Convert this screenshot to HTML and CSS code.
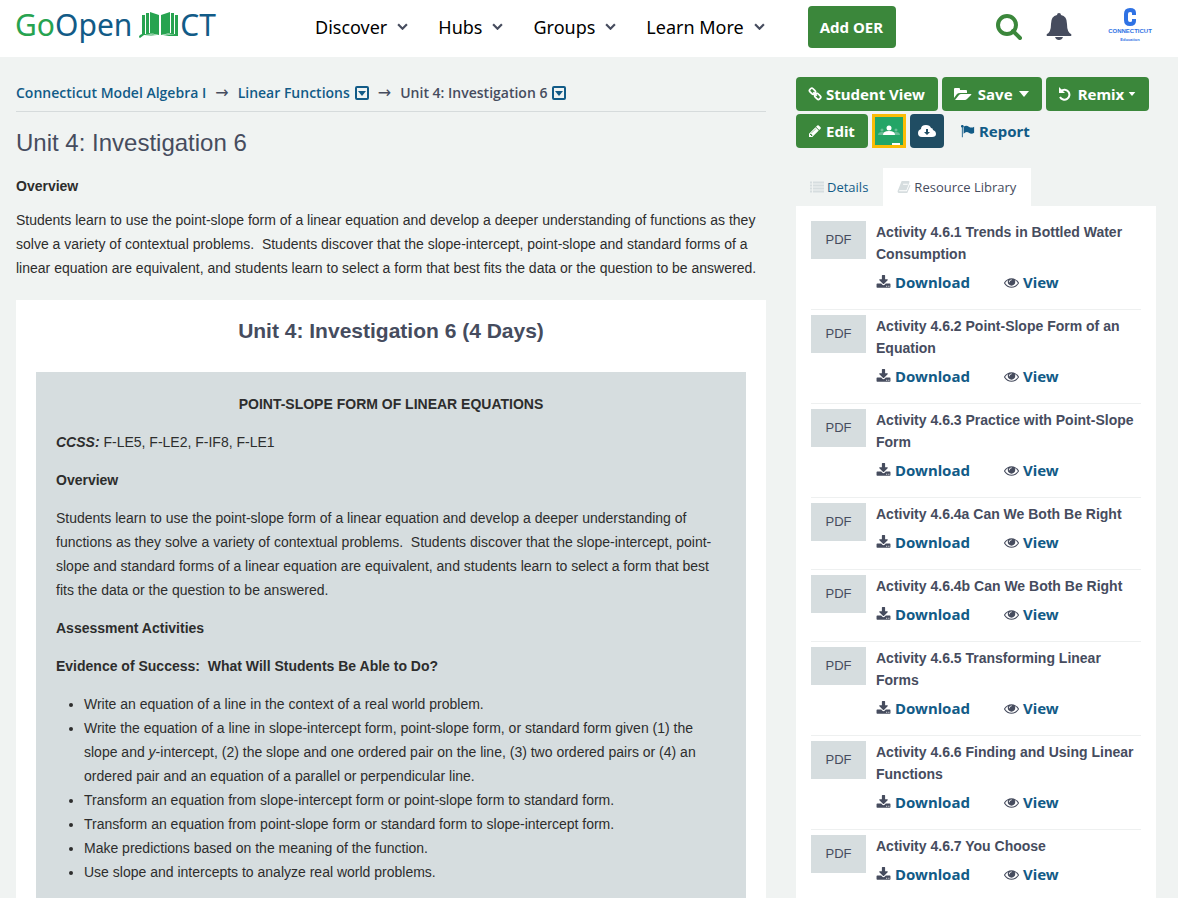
FILE: index.html
```html
<!DOCTYPE html>
<html lang="en">
<head>
  <meta charset="utf-8">
  <title>Unit 4: Investigation 6 | GoOpenCT</title>
  <link rel="stylesheet" href="styles.css">
</head>
<body>
  <svg class="sprite" aria-hidden="true">
    <symbol id="chevron" viewBox="0 0 10 6"><path d="M1 1l4 4 4-4" fill="none" stroke="currentColor" stroke-width="2"/></symbol>
    <symbol id="caret" viewBox="0 0 10 6"><path d="M0 0h10L5 6z"/></symbol>
    <symbol id="toggle" viewBox="0 0 14 14"><rect x="1" y="1" width="12" height="12" rx="1" fill="none" stroke="currentColor" stroke-width="2"/><path d="M3 5h8l-4 5z"/></symbol>
    <symbol id="download" viewBox="0 0 1792 1792"><path d="M1344 1344q0-26-19-45t-45-19-45 19-19 45 19 45 45 19 45-19 19-45zm256 0q0-26-19-45t-45-19-45 19-19 45 19 45 45 19 45-19 19-45zm128-224v320q0 40-28 68t-68 28h-1472q-40 0-68-28t-28-68v-320q0-40 28-68t68-28h465l135 136q58 56 136 56t136-56l136-136h464q40 0 68 28t28 68zm-325-569q17 41-14 70l-448 448q-18 19-45 19t-45-19l-448-448q-31-29-14-70 17-39 59-39h256v-448q0-26 19-45t45-19h256q26 0 45 19t19 45v448h256q42 0 59 39z"/></symbol>
    <symbol id="eye" viewBox="0 0 1792 1792"><path d="M1664 960q-152-236-381-353 61 104 61 225 0 185-131.500 316.500t-316.500 131.500-316.500-131.500-131.500-316.500q0-121 61-225-229 117-381 353 133 205 333.500 326.500t434.500 121.500 434.500-121.500 333.500-326.500zm-720-384q0-20-14-34t-34-14q-125 0-214.500 89.500t-89.500 214.500q0 20 14 34t34 14 34-14 14-34q0-86 61-147t147-61q20 0 34-14t14-34zm848 384q0 34-20 69-140 230-376.500 368.500t-499.500 138.500-499.500-139-376.500-368q-20-35-20-69t20-69q140-229 376.500-368t499.500-139 499.500 139 376.500 368q20 35 20 69z"/></symbol>
    <symbol id="pencil" viewBox="0 0 1792 1792"><path d="M491 1536l91-91-235-235-91 91v107h128v128h107zm523-928q0-22-22-22-10 0-17 7l-542 542q-7 7-7 17 0 22 22 22 10 0 17-7l542-542q7-7 7-17zm-54-192l416 416-832 832h-416v-416zm683 96q0 53-37 90l-166 166-416-416 166-165q36-38 90-38 53 0 91 38l235 234q37 39 37 91z"/></symbol>
    <symbol id="link" viewBox="0 0 16 16"><g fill="none" stroke="currentColor" stroke-width="2"><rect x="0" y="-2" width="7" height="5" rx="2" transform="translate(3 2) rotate(45)"/><rect x="0" y="-2" width="7" height="5" rx="2" transform="translate(9 8) rotate(45)"/><path d="M6 6l4 4"/></g></symbol>
    <symbol id="folder" viewBox="0 0 18 14"><path d="M0 11V2q0-1 1-1h4q1 0 1 1v1h6q1 0 1 1v2H6Q4 6 3 7zM1 13l4-5q1-1 2-1h10q1 0 0 1l-4 4q-1 1-2 1z"/></symbol>
    <symbol id="undo" viewBox="0 0 14 14"><path d="M3 4a5 5 0 1 1-1 6" fill="none" stroke="currentColor" stroke-width="2"/><path d="M1 0v6h6z"/></symbol>
    <symbol id="cloud" viewBox="0 0 18 14"><path fill-rule="evenodd" d="M4 13Q0 13 0 9q0-3 3-4 0-4 5-4 4 0 5 3 2 0 2 2 3 1 3 4 0 3-4 3zM8 5v3H6l3 3 3-3h-2V5z"/></symbol>
    <symbol id="flag" viewBox="0 0 16 14"><path d="M1 0h1v14H1zM3 2q3-2 6 0t6 0v7q-3 2-6 0t-6 1z"/><circle cx="1.500" cy="1.500" r="1.500"/></symbol>
    <symbol id="list" viewBox="0 0 14 11"><path d="M0 0h2v2H0zM3 0h11v2H3zM0 3h2v2H0zM3 3h11v2H3zM0 6h2v2H0zM3 6h11v2H3zM0 9h2v2H0zM3 9h11v2H3z"/></symbol>
    <symbol id="book" viewBox="0 0 14 13"><path fill-rule="evenodd" d="M5 0h7q1 0 1 1l-3 8q0 1-1 1H2q-1 1 0 1h8l3-7q1 0 1 1l-3 7q0 1-1 1H2q-2 0-2-2L4 1q0-1 1-1zm1 3v1h5V3z"/></symbol>
  </svg>

  <header class="site-header">
    <a class="logo" href="#" aria-label="GoOpen CT">
      <span class="logo-go">Go</span><span>Open</span>
      <svg class="logo-book" viewBox="0 0 39 27"><path d="M11 1l9 3v20l-9-2zM31 1l-9 3v20l9-2zM7 2h3v20l8 2-11-1zM3 4h3v19l12 2-13-1-4 3q-2-1 0-3l2-1zM32 2h3v21l-11 1 8-2zM36 4h3v21H24l12-2z"/></svg>
      <span>CT</span>
    </a>
    <nav class="main-nav">
      <a href="#">Discover <svg class="chevron"><use href="#chevron"/></svg></a>
      <a href="#">Hubs <svg class="chevron"><use href="#chevron"/></svg></a>
      <a href="#">Groups <svg class="chevron"><use href="#chevron"/></svg></a>
      <a href="#">Learn More <svg class="chevron"><use href="#chevron"/></svg></a>
    </nav>
    <button class="btn btn-add" type="button">Add OER</button>
    <div class="header-tools">
      <a class="search" href="#" aria-label="Search"><svg viewBox="0 0 26 26"><circle cx="11" cy="11" r="9" fill="none" stroke="currentColor" stroke-width="4"/><path d="M17 17l7 7" stroke="currentColor" stroke-width="4" stroke-linecap="round"/></svg></a>
      <a class="bell" href="#" aria-label="Notifications"><svg viewBox="0 0 26 28"><path d="M13 0q2 0 2 2 6 1 6 9 0 8 4 10 1 1 0 2H1q-1-1 0-2 4-2 4-10 0-8 6-9 0-2 2-2zM9 24h8q-1 3-4 3t-4-3z"/></svg></a>
      <a class="avatar" href="#">
        <svg viewBox="0 0 12 18" aria-hidden="true"><path d="M10 7V5q0-3-4-3T2 6v6q0 4 4 4t4-3v-2" fill="none" stroke="currentColor" stroke-width="4"/></svg>
        <span class="avatar-name">CONNECTICUT</span>
        <span class="avatar-sub">Education</span>
      </a>
    </div>
  </header>

  <div class="page">
    <main>
      <nav class="breadcrumb">
        <a href="#">Connecticut Model Algebra I</a>
        <span class="arrow">→</span>
        <a href="#">Linear Functions</a>
        <button class="toggle" type="button" aria-label="Show units"><svg><use href="#toggle"/></svg></button>
        <span class="arrow">→</span>
        <span>Unit 4: Investigation 6</span>
        <button class="toggle" type="button" aria-label="Show investigations"><svg><use href="#toggle"/></svg></button>
      </nav>
      <h1>Unit 4: Investigation 6</h1>
      <h4>Overview</h4>
      <p class="intro">Students learn to use the point-slope form of a linear equation and develop a deeper understanding of functions as they solve a variety of contextual problems.&nbsp; Students discover that the slope-intercept, point-slope and standard forms of a linear equation are equivalent, and students learn to select a form that best fits the data or the question to be answered.</p>

      <article class="unit">
        <h2>Unit 4: Investigation 6 (4 Days)</h2>
        <div class="unit-body">
          <p class="center"><strong>POINT-SLOPE FORM OF LINEAR EQUATIONS</strong></p>
          <p><strong><em>CCSS:</em></strong> F-LE5, F-LE2, F-IF8, F-LE1</p>
          <p><strong>Overview</strong></p>
          <p>Students learn to use the point-slope form of a linear equation and develop a deeper understanding of functions as they solve a variety of contextual problems.&nbsp; Students discover that the slope-intercept, point-slope and standard forms of a linear equation are equivalent, and students learn to select a form that best fits the data or the question to be answered.</p>
          <p><strong>Assessment Activities</strong></p>
          <p><strong>Evidence of Success:&nbsp; What Will Students Be Able to Do?</strong></p>
          <ul>
            <li>Write an equation of a line in the context of a real world problem.</li>
            <li>Write the equation of a line in slope-intercept form, point-slope form, or standard form given (1) the slope and <em>y</em>-intercept, (2) the slope and one ordered pair on the line, (3) two ordered pairs or (4) an ordered pair and an equation of a parallel or perpendicular line.</li>
            <li>Transform an equation from slope-intercept form or point-slope form to standard form.</li>
            <li>Transform an equation from point-slope form or standard form to slope-intercept form.</li>
            <li>Make predictions based on the meaning of the function.</li>
            <li>Use slope and intercepts to analyze real world problems.</li>
          </ul>
        </div>
      </article>
    </main>

    <aside>
      <div class="actions">
        <button class="btn" type="button"><svg class="icon"><use href="#link"/></svg>Student View</button>
        <button class="btn btn-menu" type="button"><svg class="icon icon-wide"><use href="#folder"/></svg>Save<svg class="caret"><use href="#caret"/></svg></button>
        <button class="btn btn-menu" type="button"><svg class="icon"><use href="#undo"/></svg>Remix<svg class="caret caret-small"><use href="#caret"/></svg></button>
        <button class="btn" type="button"><svg class="icon"><use href="#pencil"/></svg>Edit</button>
        <button class="classroom" type="button" aria-label="Share to Classroom"><svg viewBox="0 0 28 28"><g fill="#69bd95"><circle cx="7" cy="13" r="1.500"/><circle cx="21" cy="13" r="1.500"/><path d="M3 18q0-3 4-3t4 3zM17 18q0-3 4-3t4 3z"/></g><g fill="#fff"><circle cx="14" cy="11" r="2.500"/><path d="M8 18q0-4 6-4t6 4zM17 26h8v2h-8z"/></g></svg></button>
        <button class="btn btn-cloud" type="button" aria-label="Download"><svg class="icon icon-wide"><use href="#cloud"/></svg></button>
        <a class="report" href="#"><svg class="icon"><use href="#flag"/></svg>Report</a>
      </div>

      <div class="tabs">
        <a href="#"><svg><use href="#list"/></svg>Details</a>
        <a class="active" href="#"><svg><use href="#book"/></svg>Resource Library</a>
      </div>

      <ul class="library" id="library"></ul>
    </aside>
  </div>

  <script>
    var library = document.getElementById("library");
    var resources = [
      "Activity 4.6.1 Trends in Bottled Water Consumption",
      "Activity 4.6.2 Point-Slope Form of an Equation",
      "Activity 4.6.3 Practice with Point-Slope Form",
      "Activity 4.6.4a Can We Both Be Right",
      "Activity 4.6.4b Can We Both Be Right",
      "Activity 4.6.5 Transforming Linear Forms",
      "Activity 4.6.6 Finding and Using Linear Functions",
      "Activity 4.6.7 You Choose"
    ];

    library.innerHTML = resources.map(function(title) {
      return `
        <li>
          <span class="file-type">PDF</span>
          <div>
            <h5>${title}</h5>
            <div class="file-links">
              <a href="#"><svg><use href="#download"/></svg>Download</a>
              <a href="#"><svg><use href="#eye"/></svg>View</a>
            </div>
          </div>
        </li>
      `;
    }).join("");
  </script>
</body>
</html>
```

FILE: styles.css
```css
* {
  box-sizing: border-box;
}

body {
  margin: 0;
  background-color: #f0f3f2;
  color: #2d2d2d;
  font-family: "Liberation Sans", Arial, sans-serif;
  font-size: 14px;
  line-height: 24px;
}

a {
  color: #125b87;
  text-decoration: none;
}

button {
  font-family: inherit;
  cursor: pointer;
}

svg {
  fill: currentColor;
  flex: none;
}

.sprite {
  display: none;
}

/* header */
.site-header {
  display: flex;
  align-items: center;
  height: 57px;
  padding: 0 28px 4px 15px;
  background-color: #fff;
  font-family: "Noto Sans", sans-serif;
}

.logo {
  display: flex;
  align-items: center;
  width: 300px;
  padding-bottom: 4px;
  font-size: 30px;
  line-height: 40px;
}

.logo-go {
  color: #27a350;
}

.logo-book {
  width: 39px;
  height: 27px;
  margin: 0 2px 0 7px;
  color: #27a350;
}

.main-nav {
  display: flex;
  gap: 30px;
}

.main-nav a {
  display: flex;
  align-items: center;
  color: #000;
  font-size: 18px;
}

.chevron {
  width: 11px;
  height: 7px;
  margin-left: 10px;
  color: #464c5e;
}

.btn {
  display: inline-flex;
  align-items: center;
  height: 34px;
  padding: 0 13px 0 12px;
  border: none;
  border-radius: 4px;
  background-color: #3b873b;
  color: #fff;
  font-family: "Noto Sans", sans-serif;
  font-size: 15px;
  font-weight: bold;
}

.btn-add {
  height: 42px;
  margin-left: 43px;
}

.header-tools {
  display: flex;
  align-items: center;
  margin-left: auto;
}

.search {
  color: #3b873b;
}

.search svg {
  display: block;
  width: 26px;
  height: 26px;
}

.bell {
  margin-left: 24px;
  color: #464c5e;
}

.bell svg {
  display: block;
  width: 26px;
  height: 28px;
}

.avatar {
  display: flex;
  flex-direction: column;
  align-items: center;
  width: 40px;
  margin-left: 38px;
  padding-bottom: 4px;
  color: #2f72e4;
  font-family: "Liberation Sans", Arial, sans-serif;
  font-weight: bold;
}

.avatar svg {
  width: 12px;
  height: 18px;
}

.avatar-name {
  font-size: 6px;
  line-height: 11px;
}

.avatar-sub {
  font-size: 4px;
  line-height: 5px;
}

/* page */
.page {
  display: flex;
  gap: 30px;
  padding: 20px 22px 0 16px;
}

main {
  flex: 1;
  min-width: 0;
}

.breadcrumb {
  display: flex;
  align-items: center;
  padding: 4px 0 6px;
  border-bottom: 1px solid #d6dbdc;
  color: #464c5e;
  font-family: "Open Sans", sans-serif;
  font-weight: 600;
}

.arrow {
  margin: 0 9px;
  font-family: "DejaVu Sans", sans-serif;
  font-size: 16px;
  font-weight: normal;
}

.toggle {
  margin: 0 0 0 5px;
  padding: 0;
  border: none;
  background: none;
  color: #125b87;
}

.toggle svg {
  display: block;
  width: 14px;
  height: 14px;
}

h1 {
  margin: 16px 0;
  color: #464c5e;
  font-size: 24px;
  font-weight: normal;
  line-height: 30px;
}

h4 {
  margin: 0 0 10px;
  font-size: 14px;
}

.intro {
  margin: 0 0 20px;
}

.unit {
  padding: 20px;
  background-color: #fff;
}

.unit h2 {
  margin: 0 0 30px;
  color: #464c5e;
  font-size: 21px;
  line-height: 22px;
  text-align: center;
}

.unit-body {
  padding: 20px;
  background-color: #d6dddf;
}

.unit-body p {
  margin: 0 0 14px;
}

.center {
  text-align: center;
}

.unit-body ul {
  margin: 0;
  padding-left: 28px;
}

/* sidebar */
aside {
  width: 360px;
}

.actions {
  display: flex;
  flex-wrap: wrap;
  gap: 3px 4px;
}

.icon {
  width: 14px;
  height: 14px;
  margin-right: 4px;
}

.icon-wide {
  width: 18px;
}

.btn-menu .icon {
  margin-right: 6px;
}

.caret {
  width: 10px;
  height: 6px;
  margin-left: 6px;
}

.caret-small {
  width: 8px;
  height: 4px;
  margin-left: 4px;
}

.classroom {
  width: 34px;
  height: 34px;
  padding: 0;
  border: 3px solid #fbbc05;
  background-color: #23a566;
}

.classroom svg {
  display: block;
}

.btn-cloud {
  padding: 0 8px;
  background-color: #204d63;
}

.btn-cloud .icon {
  margin: 0;
}

.report {
  display: flex;
  align-items: center;
  margin-left: 13px;
  font-family: "Noto Sans", sans-serif;
  font-size: 15px;
  font-weight: bold;
}

.tabs {
  display: flex;
  margin-top: 20px;
  font-family: "Open Sans", sans-serif;
  font-size: 13px;
}

.tabs a {
  display: flex;
  align-items: center;
  height: 38px;
  padding: 0 15px 0 14px;
}

.tabs svg {
  width: 14px;
  height: 12px;
  margin-right: 3px;
  color: #d6dddf;
}

.tabs .active {
  background-color: #fff;
  color: #464c5e;
}

.library {
  margin: 0;
  padding: 10px 15px;
  background-color: #fff;
  list-style: none;
}

.library li {
  display: flex;
  align-items: flex-start;
  gap: 10px;
  padding: 5px 0 15px;
  border-bottom: 1px solid #eef0f0;
}

.file-type {
  flex: none;
  width: 55px;
  background-color: #d6dddf;
  color: #464c5e;
  font-size: 13px;
  line-height: 38px;
  text-align: center;
}

h5 {
  margin: 0 0 5px;
  color: #464c5e;
  font-size: 14px;
  line-height: 22px;
}

.file-links {
  display: flex;
  gap: 34px;
  font-family: "Noto Sans", sans-serif;
  font-size: 15px;
  font-weight: bold;
}

.file-links a {
  display: flex;
  align-items: center;
}

.file-links svg {
  width: 15px;
  height: 15px;
  margin-right: 4px;
  color: #464c5e;
}
```
